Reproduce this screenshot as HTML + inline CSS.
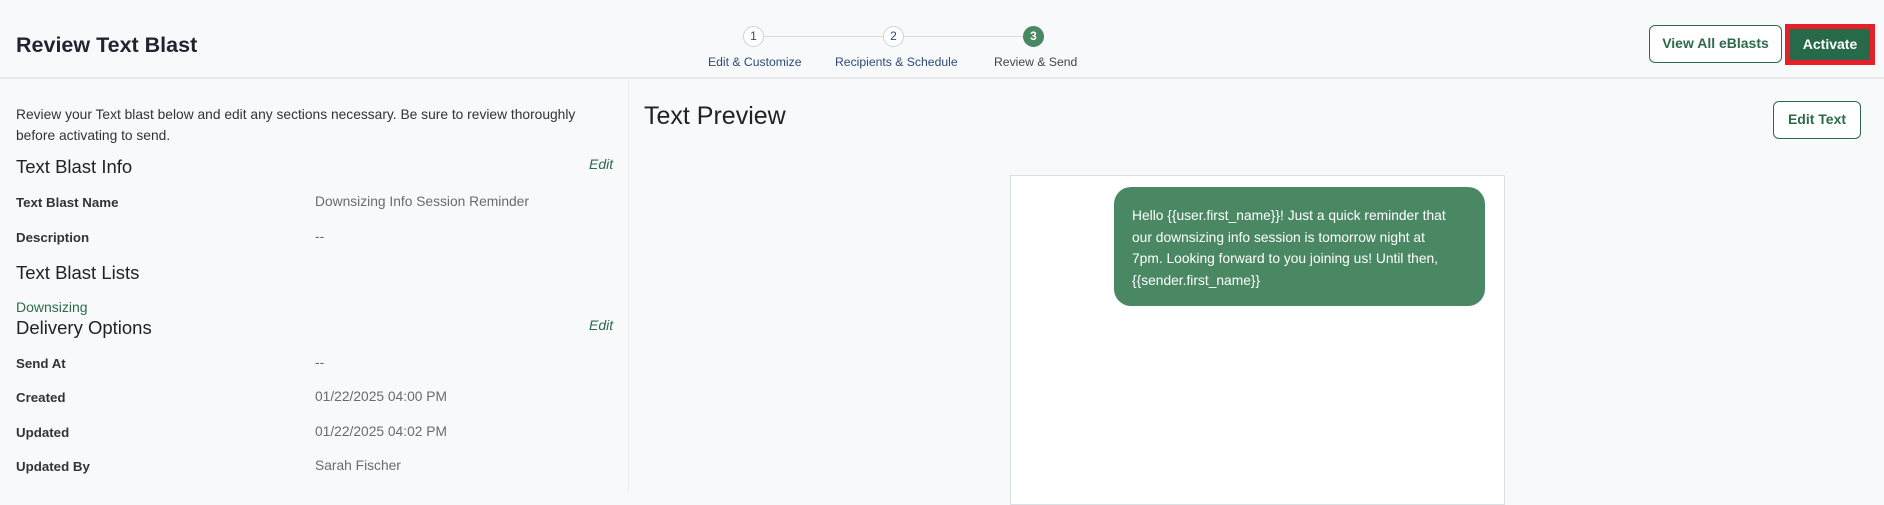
<!DOCTYPE html>
<html><head><meta charset="utf-8"><style>
*{margin:0;padding:0;box-sizing:border-box}
body{width:1884px;height:492px;overflow:hidden;background:#f8f9fb;font-family:"Liberation Sans",sans-serif;color:#222;position:relative}
.a{position:absolute;white-space:nowrap}
.hdr{position:absolute;left:0;top:0;width:1884px;height:79px;border-bottom:2px solid #e6e8eb}
.circ{position:absolute;width:21px;height:21px;border-radius:50%;border:1px solid #cfd3d8;background:#fff;font-size:12px;color:#2c4a7a;text-align:center;line-height:19px}
.lbl{font-size:12.2px;color:#2c4a7a}
.btn{position:absolute;border:1.5px solid #2c6b4a;border-radius:6px;background:#fff;color:#2c6b4a;font-weight:bold;font-size:14px;text-align:center}
.k{font-size:13.3px;font-weight:bold;color:#333}
.v{font-size:13.8px;color:#6b6b6b}
.h{font-size:18.5px;color:#222}
.e{font-size:14px;font-style:italic;color:#2c6b4a}
</style></head><body>
<div class="hdr"></div>
<div class="a" style="left:16px;top:33px;font-size:21.5px;font-weight:bold;color:#1e2530">Review Text Blast</div>
<div class="a" style="left:764px;top:36px;width:270px;height:1px;background:#dadde1"></div>
<div class="circ" style="left:743px;top:26px">1</div>
<div class="circ" style="left:883px;top:26px">2</div>
<div class="circ" style="left:1023px;top:26px;background:#4a8763;border-color:#4a8763;color:#fff;font-weight:bold">3</div>
<div class="a lbl" style="left:708px;top:55px">Edit &amp; Customize</div>
<div class="a lbl" style="left:835px;top:55px">Recipients &amp; Schedule</div>
<div class="a lbl" style="left:994px;top:55px;color:#444">Review &amp; Send</div>
<div class="btn" style="left:1649px;top:25px;width:133px;height:38px;line-height:35px">View All eBlasts</div>
<div class="a" style="left:1785px;top:24px;width:90px;height:41px;background:#e5202a"></div>
<div class="a" style="left:1790px;top:29px;width:80px;height:31px;background:#266a4a;color:#fff;font-weight:bold;font-size:14px;text-align:center;line-height:31px">Activate</div>
<div class="a" style="left:628px;top:80px;width:1px;height:412px;background:#eceef0"></div>
<div class="a" style="left:16px;top:104px;font-size:13.8px;color:#333;line-height:21px">Review your Text blast below and edit any sections necessary. Be sure to review thoroughly<br>before activating to send.</div>
<div class="a h" style="left:16px;top:156px">Text Blast Info</div>
<div class="a e" style="left:589px;top:156px">Edit</div>
<div class="a k" style="left:16px;top:195px">Text Blast Name</div>
<div class="a v" style="left:315px;top:194px">Downsizing Info Session Reminder</div>
<div class="a k" style="left:16px;top:230px">Description</div>
<div class="a v" style="left:315px;top:229px">--</div>
<div class="a h" style="left:16px;top:262px">Text Blast Lists</div>
<div class="a" style="left:16px;top:299px;font-size:14px;color:#2c6b4a">Downsizing</div>
<div class="a h" style="left:16px;top:317px">Delivery Options</div>
<div class="a e" style="left:589px;top:317px">Edit</div>
<div class="a k" style="left:16px;top:356px">Send At</div>
<div class="a v" style="left:315px;top:355px">--</div>
<div class="a k" style="left:16px;top:390px">Created</div>
<div class="a v" style="left:315px;top:389px">01/22/2025 04:00 PM</div>
<div class="a k" style="left:16px;top:425px">Updated</div>
<div class="a v" style="left:315px;top:424px">01/22/2025 04:02 PM</div>
<div class="a k" style="left:16px;top:459px">Updated By</div>
<div class="a v" style="left:315px;top:458px">Sarah Fischer</div>
<div class="a" style="left:644px;top:102px;font-size:25px;color:#222">Text Preview</div>
<div class="btn" style="left:1773px;top:101px;width:88px;height:38px;line-height:35px">Edit Text</div>
<div class="a" style="left:1010px;top:175px;width:495px;height:330px;background:#fff;border:1px solid #dcdfe3"></div>
<div class="a" style="left:1114px;top:187px;width:371px;height:119px;background:#4a8763;border-radius:17px;color:#fff;font-size:13.8px;line-height:21.7px;padding:18px 0 0 18px;white-space:normal">Hello {{user.first_name}}! Just a quick reminder that<br>our downsizing info session is tomorrow night at<br>7pm. Looking forward to you joining us! Until then,<br>{{sender.first_name}}</div>
</body></html>
